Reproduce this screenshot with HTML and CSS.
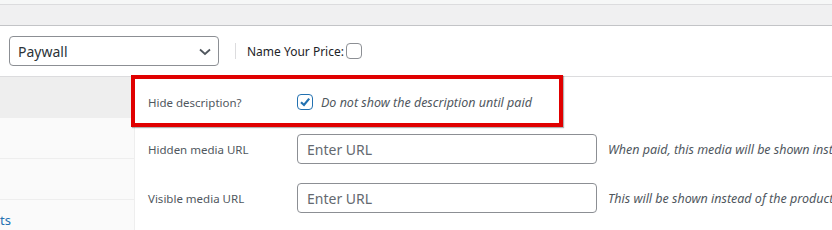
FILE: index.html
```html
<!DOCTYPE html>
<html lang="en">
<head>
    <meta charset="UTF-8">
    <meta name="viewport" content="width=device-width, initial-scale=1.0">
    <title>Product data - Paywall</title>
    <link rel="stylesheet" href="styles.css">
</head>
<body>
    <div class="topstrip"></div>
    <div class="titlebar"></div>

    <div class="typebar">
        <div class="select">
            <span>Paywall</span>
            <svg class="chevron" width="12" height="8" viewBox="0 0 12 8"><path d="M1 1.5 L6 6 L11 1.5" fill="none" stroke="#50575e" stroke-width="1.8"/></svg>
        </div>
        <span class="sep"></span>
        <label class="nyp">Name Your Price: <span class="box"></span></label>
    </div>

    <div class="panel">
        <ul class="tabs">
            <li class="active"></li>
            <li></li>
            <li></li>
            <li><a href="#">Linked Products</a></li>
        </ul>

        <div class="fields">
            <div class="field field-check">
                <span class="label">Hide description?</span>
                <span class="box checked">
                    <svg width="14" height="14" viewBox="0 0 14 14"><path d="M3 7.2 L6 10 L11.2 3.6" fill="none" stroke="#2271b1" stroke-width="2.2"/></svg>
                </span>
                <span class="desc">Do not show the description until paid</span>
            </div>
            <div class="field">
                <span class="label">Hidden media URL</span>
                <input class="url" type="text" placeholder="Enter URL">
                <span class="desc">When paid, this media will be shown instead of the product image</span>
            </div>
            <div class="field">
                <span class="label">Visible media URL</span>
                <input class="url" type="text" placeholder="Enter URL">
                <span class="desc">This will be shown instead of the product image until paid</span>
            </div>
        </div>

        <!-- annotation frame -->
        <div class="highlight"></div>
    </div>
</body>
</html>
```

FILE: styles.css
```css
body {
    margin: 0;
    width: 832px;
    height: 230px;
    overflow: hidden;
    font-family: "Noto Sans", "Open Sans", sans-serif;
    font-size: 12px;
    color: #50575e;
    background: white;
}
.topstrip {
    height: 4px;
    background: #f6f7f7;
    border-bottom: 1px solid #dcdcde;
}
.titlebar {
    height: 20px;
    background: #f0f0f1;
    border-bottom: 1px solid #c3c4c7;
}
.typebar {
    height: 50px;
    border-bottom: 1px solid #dcdcde;
    display: flex;
    align-items: center;
    padding-left: 9px;
}
.select {
    width: 210px;
    height: 30px;
    box-sizing: border-box;
    border: 1px solid #8c8f94;
    border-radius: 4px;
    display: flex;
    align-items: center;
    justify-content: space-between;
    padding: 0 7px 0 8px;
    font-size: 14px;
    color: #2c3338;
}
.chevron {
    margin-top: 1px;
}
.sep {
    width: 1px;
    height: 16px;
    background: #dcdcde;
    margin: 0 11px 0 16px;
}
.nyp {
    display: flex;
    align-items: center;
    gap: 2px;
    font-size: 12px;
    color: #1d2327;
}
.box {
    width: 16px;
    height: 16px;
    box-sizing: border-box;
    border: 1px solid #8c8f94;
    border-radius: 4px;
    background: white;
    display: inline-flex;
    align-items: center;
    justify-content: center;
}
.box.checked {
    border-color: #2271b1;
}
.panel {
    position: relative;
    display: flex;
}
.tabs {
    list-style: none;
    margin: 0;
    padding: 0;
    width: 134px;
    flex-shrink: 0;
    height: 160px;
    background: #fafafa;
    border-right: 1px solid #eee;
}
.tabs li {
    height: 40px;
    line-height: 40px;
    border-bottom: 1px solid #eee;
    white-space: nowrap;
    overflow: hidden;
}
.tabs li.active {
    background: #eee;
}
.tabs a {
    display: block;
    margin-left: -87px;
    font-size: 13px;
    color: #2271b1;
    text-decoration: none;
}
.fields {
    flex: 1;
    min-width: 0;
    overflow: hidden;
    padding-top: 10px;
}
.field {
    display: flex;
    align-items: center;
    height: 30px;
    margin-bottom: 19px;
    white-space: nowrap;
}
.field-check {
    margin-bottom: 17px;
}
.label {
    width: 149px;
    margin-left: 13px;
    flex-shrink: 0;
    font-size: 11.5px;
}
.url {
    width: 300px;
    height: 30px;
    box-sizing: border-box;
    border: 1px solid #8c8f94;
    border-radius: 4px;
    padding: 0 9px;
    font-family: inherit;
    font-size: 14px;
    flex-shrink: 0;
}
.url::placeholder {
    color: #646970;
}
.desc {
    font-style: italic;
    font-size: 12.5px;
    margin-left: 11px;
}
.field-check .desc {
    margin-left: 8px;
}
.highlight {
    position: absolute;
    left: 131px;
    top: -2px;
    width: 432px;
    height: 52px;
    box-sizing: border-box;
    border: 4px solid #e00000;
    box-shadow: 1px 1px 1px rgba(0,0,0,0.3);
}
```
